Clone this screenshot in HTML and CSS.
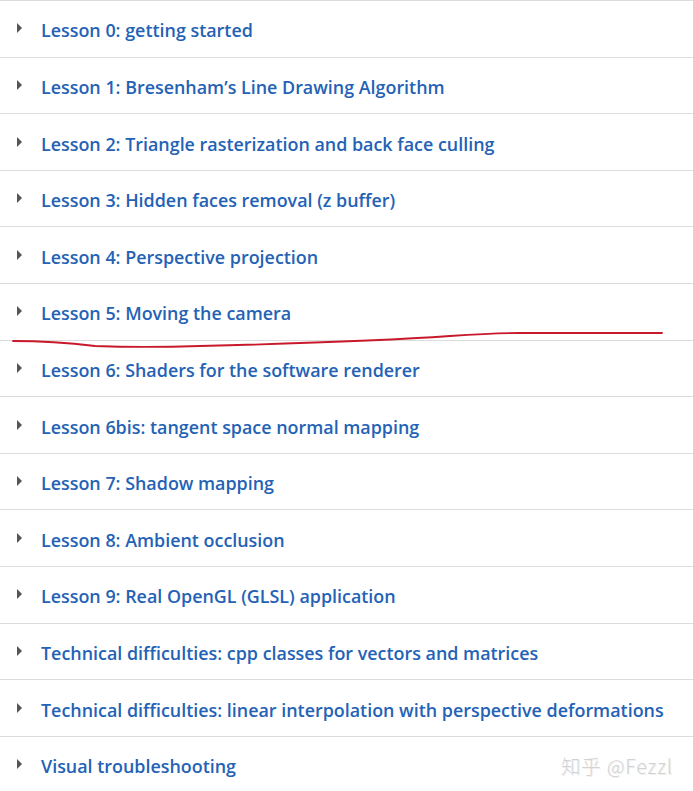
FILE: index.html
```html
<!DOCTYPE html>
<html>
<head>
<meta charset="utf-8">
<link rel="stylesheet" href="styles.css">
</head>
<body>
<div class="page">
  <ul class="lessons">
    <li class="row"><span class="tri"></span><a class="link">Lesson 0: getting started</a></li>
    <li class="row"><span class="tri"></span><a class="link">Lesson 1: Bresenham’s Line Drawing Algorithm</a></li>
    <li class="row"><span class="tri"></span><a class="link">Lesson 2: Triangle rasterization and back face culling</a></li>
    <li class="row"><span class="tri"></span><a class="link">Lesson 3: Hidden faces removal (z buffer)</a></li>
    <li class="row"><span class="tri"></span><a class="link">Lesson 4: Perspective projection</a></li>
    <li class="row"><span class="tri"></span><a class="link">Lesson 5: Moving the camera</a></li>
    <li class="row"><span class="tri"></span><a class="link">Lesson 6: Shaders for the software renderer</a></li>
    <li class="row"><span class="tri"></span><a class="link">Lesson 6bis: tangent space normal mapping</a></li>
    <li class="row"><span class="tri"></span><a class="link">Lesson 7: Shadow mapping</a></li>
    <li class="row"><span class="tri"></span><a class="link">Lesson 8: Ambient occlusion</a></li>
    <li class="row"><span class="tri"></span><a class="link">Lesson 9: Real OpenGL (GLSL) application</a></li>
    <li class="row"><span class="tri"></span><a class="link">Technical difficulties: cpp classes for vectors and matrices</a></li>
    <li class="row"><span class="tri"></span><a class="link">Technical difficulties: linear interpolation with perspective deformations</a></li>
    <li class="row last"><span class="tri"></span><a class="link">Visual troubleshooting</a></li>
  </ul>
  <svg class="scribble" width="693" height="20" viewBox="0 0 693 20">
    <path d="M13 11 C40 11 70 13 95 16 C120 17 170 17 200 16 C280 14 380 11 450 6 C480 4 500 3 520 3 L662 3" fill="none" stroke="#c8192c" stroke-width="1.8" stroke-linecap="round"/>
  </svg>
  <div class="watermark">知乎 @Fezzl</div>
</div>
</body>
</html>
```
FILE: styles.css
```css
html, body {
  margin: 0;
  padding: 0;
  background: #fff;
}
.page {
  position: relative;
  width: 693px;
  height: 791px;
  overflow: hidden;
}
.lessons {
  list-style: none;
  margin: 0;
  padding: 0;
}
.row {
  box-sizing: border-box;
  height: 56.62px;
  border-top: 1px solid #dcdcdc;
  display: flex;
  align-items: center;
  padding-left: 17px;
  padding-top: 3px;
}
.tri {
  width: 0;
  height: 0;
  border-top: 5px solid transparent;
  border-bottom: 5px solid transparent;
  border-left: 5px solid #555;
  margin-right: 19px;
  margin-top: -4px;
}
.link {
  font-family: "Open Sans", "Noto Sans", sans-serif;
  font-size: 17.9px;
  font-weight: 600;
  color: #2462b5;
  text-decoration: none;
  white-space: nowrap;
}
.scribble {
  position: absolute;
  left: 0;
  top: 330px;
}
.watermark {
  position: absolute;
  left: 561px;
  top: 751px;
  font-family: "Noto Sans CJK SC", "Liberation Sans", sans-serif;
  font-size: 19.5px;
  font-weight: 300;
  letter-spacing: 0.8px;
  color: #d2d2d2;
  text-shadow: 1px 1px 0 #f0f0f0;
}
```
